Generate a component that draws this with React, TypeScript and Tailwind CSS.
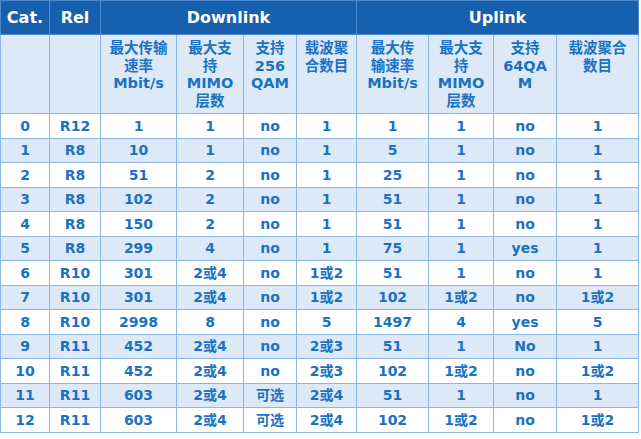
import React from "react"

// LTE UE category table
const rows = [
  ["0", "R12", "1", "1", "no", "1", "1", "1", "no", "1"],
  ["1", "R8", "10", "1", "no", "1", "5", "1", "no", "1"],
  ["2", "R8", "51", "2", "no", "1", "25", "1", "no", "1"],
  ["3", "R8", "102", "2", "no", "1", "51", "1", "no", "1"],
  ["4", "R8", "150", "2", "no", "1", "51", "1", "no", "1"],
  ["5", "R8", "299", "4", "no", "1", "75", "1", "yes", "1"],
  ["6", "R10", "301", "2或4", "no", "1或2", "51", "1", "no", "1"],
  ["7", "R10", "301", "2或4", "no", "1或2", "102", "1或2", "no", "1或2"],
  ["8", "R10", "2998", "8", "no", "5", "1497", "4", "yes", "5"],
  ["9", "R11", "452", "2或4", "no", "2或3", "51", "1", "No", "1"],
  ["10", "R11", "452", "2或4", "no", "2或3", "102", "1或2", "no", "1或2"],
  ["11", "R11", "603", "2或4", "可选", "2或4", "51", "1", "no", "1"],
  ["12", "R11", "603", "2或4", "可选", "2或4", "102", "1或2", "no", "1或2"],
]

const widths = [49, 51, 76, 67, 53, 60, 72, 65, 63, 82]

const subHeads = [
  ["最大传输", "速率", "Mbit/s"],
  ["最大支", "持", "MIMO", "层数"],
  ["支持", "256", "QAM"],
  ["载波聚", "合数目"],
  ["最大传", "输速率", "Mbit/s"],
  ["最大支", "持", "MIMO", "层数"],
  ["支持", "64QA", "M"],
  ["载波聚合", "数目"],
]

export default function App() {
  return (
    <div
      className="w-[641px] h-[439px] bg-white"
      style={{ fontFamily: '"DejaVu Sans", "Noto Sans CJK SC", sans-serif' }}
    >
      <table className="table-fixed border-collapse w-[638px] border border-[#8db6e2] font-bold text-[#1a72c2]">
        <colgroup>
          {widths.map((w, i) => (
            <col key={i} style={{ width: w }} />
          ))}
        </colgroup>
        <thead>
          <tr className="h-[34px] bg-[#1660ad] text-white text-[16px]">
            <th className="border border-[#4c8acb] font-bold">Cat.</th>
            <th className="border border-[#4c8acb] font-bold">Rel</th>
            <th colSpan={4} className="border border-[#4c8acb] font-bold">
              Downlink
            </th>
            <th colSpan={4} className="border border-[#4c8acb] font-bold">
              Uplink
            </th>
          </tr>
          <tr className="h-[79px] bg-[#dde9f6] text-[14.5px] leading-[17.5px]">
            <th className="border border-[#8db6e2]"></th>
            <th className="border border-[#8db6e2]"></th>
            {subHeads.map((lines, i) => (
              <th key={i} className="border border-[#8db6e2] align-top pt-[5px] font-bold">
                {lines.map((l, j) => (
                  <div key={j}>{l}</div>
                ))}
              </th>
            ))}
          </tr>
        </thead>
        <tbody className="text-[14px]">
          {rows.map((r, i) => (
            <tr key={i} className={`h-[24.5px] ${i % 2 === 1 ? "bg-[#dde9f6]" : "bg-white"}`}>
              {r.map((c, j) => (
                <td key={j} className="border border-[#8db6e2] text-center p-0 leading-none">
                  {c}
                </td>
              ))}
            </tr>
          ))}
        </tbody>
      </table>
    </div>
  )
}
